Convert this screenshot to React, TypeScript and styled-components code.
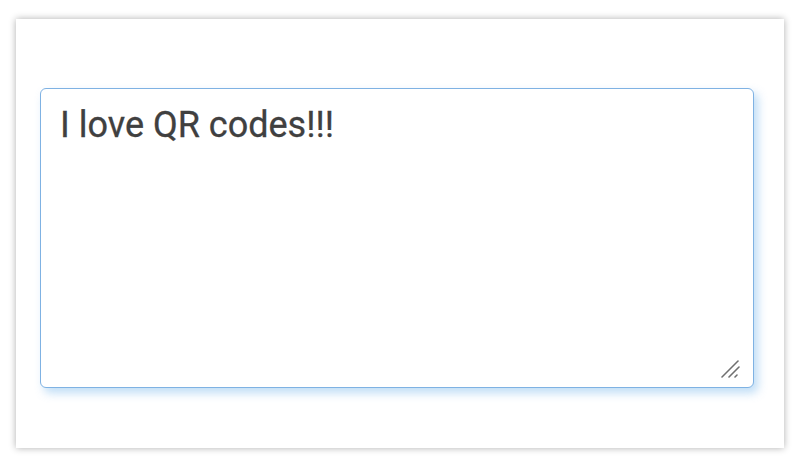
import React from 'react';
import styled, { createGlobalStyle } from 'styled-components';

const GlobalStyle = createGlobalStyle`
  html, body {
    margin: 0;
    padding: 0;
    background: #ffffff;
  }
`;

const Page = styled.div`
  width: 800px;
  height: 466px;
  padding: 19px 16px 18px;
  box-sizing: border-box;
`;

const Card = styled.div`
  background: #ffffff;
  height: 100%;
  box-sizing: border-box;
  padding: 69px 30px 60px 24px;
  box-shadow: 0 0 7px rgba(0, 0, 0, 0.32);
`;

const Field = styled.div`
  position: relative;
  height: 100%;
`;

const MessageInput = styled.textarea`
  display: block;
  width: 100%;
  height: 100%;
  box-sizing: border-box;
  padding: 11px 19px;
  border: 1px solid #7fb2e3;
  border-radius: 6px;
  font-family: Roboto, 'Noto Sans', sans-serif;
  font-size: 36px;
  line-height: 1.4;
  color: #404040;
  -webkit-text-stroke: 0.3px #404040;
  outline: none;
  resize: none;
  box-shadow: 4px 5px 10px rgba(102, 175, 233, 0.42);
`;

const Grip = styled.svg`
  position: absolute;
  right: 14px;
  bottom: 9px;
  pointer-events: none;
`;

export default function App() {
  return (
    <>
      <GlobalStyle />
      <Page>
        <Card>
          <Field>
            <MessageInput defaultValue='I love QR codes!!!' />
            <Grip width='20' height='20' viewBox='0 0 20 20'>
              <g stroke='#707070' strokeWidth='1.6' strokeLinecap='round'>
                <line x1='2' y1='18' x2='18' y2='2' />
                <line x1='9' y1='18' x2='19' y2='8' />
                <line x1='15' y1='18' x2='17' y2='16' />
              </g>
            </Grip>
          </Field>
        </Card>
      </Page>
    </>
  );
}
